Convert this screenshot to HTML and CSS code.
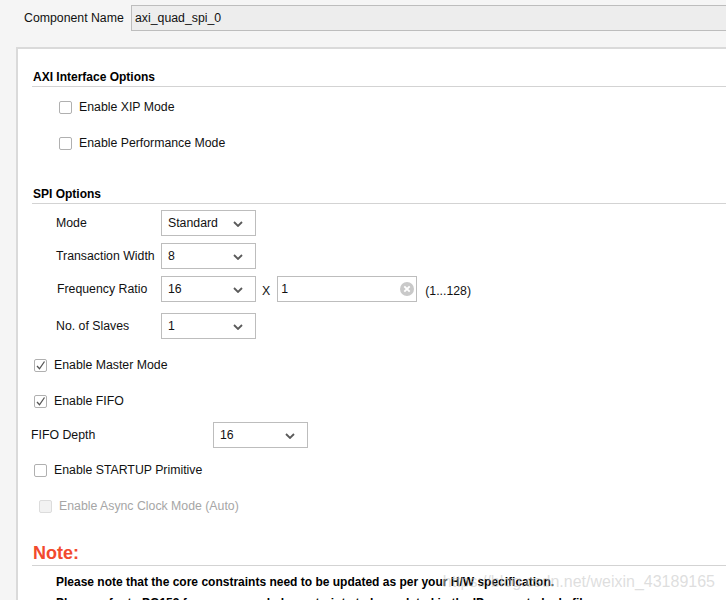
FILE: index.html
```html
<!DOCTYPE html>
<html>
<head>
<meta charset="utf-8">
<link rel="stylesheet" href="styles.css">
</head>
<body>
<div class="header">
  <div class="header-label">Component Name</div>
  <div class="name-field">axi_quad_spi_0</div>
</div>
<div class="panel">
  <div class="section-title">AXI Interface Options</div>
  <div class="axi-options">
    <div class="check-row"><span class="cb"></span><span>Enable XIP Mode</span></div>
    <div class="check-row"><span class="cb"></span><span>Enable Performance Mode</span></div>
  </div>

  <div class="section-title spi-title">SPI Options</div>
  <div class="spi-fields">
    <div class="field-row">
      <div class="field-label">Mode</div>
      <div class="select"><span>Standard</span><svg class="chev" width="10" height="6" viewBox="0 0 10 6"><polyline points="1,1 5,5 9,1" fill="none" stroke="#5a5a5a" stroke-width="1.8"/></svg></div>
    </div>
    <div class="field-row">
      <div class="field-label">Transaction Width</div>
      <div class="select"><span>8</span><svg class="chev" width="10" height="6" viewBox="0 0 10 6"><polyline points="1,1 5,5 9,1" fill="none" stroke="#5a5a5a" stroke-width="1.8"/></svg></div>
    </div>
    <div class="field-row">
      <div class="field-label freq-label">Frequency Ratio</div>
      <div class="select"><span>16</span><svg class="chev" width="10" height="6" viewBox="0 0 10 6"><polyline points="1,1 5,5 9,1" fill="none" stroke="#5a5a5a" stroke-width="1.8"/></svg></div>
      <span class="times">X</span>
      <div class="text-input"><span>1</span>
        <svg class="clear" width="14" height="14" viewBox="0 0 14 14"><circle cx="7" cy="7" r="7" fill="#c9c9c9"/><path d="M4.3 4.3 L9.7 9.7 M9.7 4.3 L4.3 9.7" stroke="#fff" stroke-width="1.9"/></svg>
      </div>
      <span class="range">(1...128)</span>
    </div>
    <div class="field-row slaves">
      <div class="field-label">No. of Slaves</div>
      <div class="select"><span>1</span><svg class="chev" width="10" height="6" viewBox="0 0 10 6"><polyline points="1,1 5,5 9,1" fill="none" stroke="#5a5a5a" stroke-width="1.8"/></svg></div>
    </div>
  </div>

  <div class="check-row master"><span class="cb"><svg width="11" height="11" viewBox="0 0 11 11"><polyline points="2,6 4.5,8.8 9.5,1.5" fill="none" stroke="#555" stroke-width="1.3"/></svg></span><span>Enable Master Mode</span></div>
  <div class="check-row fifo"><span class="cb"><svg width="11" height="11" viewBox="0 0 11 11"><polyline points="2,6 4.5,8.8 9.5,1.5" fill="none" stroke="#555" stroke-width="1.3"/></svg></span><span>Enable FIFO</span></div>
  <div class="field-row depth">
    <div class="depth-label">FIFO Depth</div>
    <div class="select"><span>16</span><svg class="chev" width="10" height="6" viewBox="0 0 10 6"><polyline points="1,1 5,5 9,1" fill="none" stroke="#5a5a5a" stroke-width="1.8"/></svg></div>
  </div>
  <div class="check-row startup"><span class="cb"></span><span>Enable STARTUP Primitive</span></div>
  <div class="check-row async disabled"><span class="cb"></span><span>Enable Async Clock Mode (Auto)</span></div>

  <div class="note-title">Note:</div>
  <div class="note-text">Please note that the core constraints need to be updated as per your H/W specification.</div>
  <div class="note-text second">Please refer to PG153 for recommended constraints to be updated in the IP generated xdc file.</div>
</div>
<div class="watermark">https://blog.csdn.net/weixin_43189165</div>
</body>
</html>
```

FILE: styles.css
```css
html, body {
  height: 600px;
  overflow: hidden;
}
body {
  margin: 0;
  background: #f5f5f5;
  font-family: "Liberation Sans", Arial, sans-serif;
  font-size: 12.3px;
  color: #111;
  position: relative;
}
.header {
  display: flex;
  align-items: center;
  height: 26px;
  margin-top: 5px;
  padding-left: 24px;
}
.header-label {
  width: 107px;
}
.name-field {
  flex: 1;
  height: 26px;
  box-sizing: border-box;
  border: 1px solid #bdbdbd;
  border-right: 0;
  background: #ededed;
  padding-left: 3px;
  display: flex;
  align-items: center;
}
.panel {
  margin: 16px 0 0 16px;
  border-top: 2px solid #dadada;
  border-left: 2px solid #dadada;
  background: #fff;
  padding-top: 20px;
  box-sizing: border-box;
  height: 553px;
  overflow: hidden;
}
.section-title {
  margin-left: 14px;
  padding-left: 1px;
  line-height: 16px;
  padding-bottom: 1px;
  border-bottom: 1px solid #d3d3d3;
  font-size: 12px;
  font-weight: bold;
  color: #000;
}
.axi-options {
  margin-top: 12px;
  padding-left: 41px;
  display: flex;
  flex-direction: column;
  gap: 20px;
}
.check-row {
  display: flex;
  align-items: center;
  height: 16px;
  gap: 7px;
}
.cb {
  width: 13px;
  height: 13px;
  box-sizing: border-box;
  border: 1px solid #b0b0b0;
  border-radius: 2px;
  background: #fff;
  display: flex;
  align-items: center;
  justify-content: center;
}
.spi-title {
  margin-top: 35px;
}
.spi-fields {
  margin-top: 6px;
  padding-left: 38px;
}
.field-row {
  display: flex;
  align-items: center;
  height: 26px;
}
.field-row + .field-row {
  margin-top: 7px;
}
.field-row.slaves {
  margin-top: 11px;
}
.field-label {
  width: 105px;
}
.freq-label {
  padding-left: 1px;
  width: 104px;
}
.select {
  width: 95px;
  height: 26px;
  box-sizing: border-box;
  border: 1px solid #bdbdbd;
  background: #fff;
  padding-left: 6px;
  padding-right: 12px;
  display: flex;
  align-items: center;
  justify-content: space-between;
}
.chev {
  margin-top: 1px;
}
.times {
  margin-left: 6px;
  padding-top: 4px;
}
.text-input {
  margin-left: 7px;
  width: 140px;
  height: 26px;
  box-sizing: border-box;
  border: 1px solid #bdbdbd;
  padding-left: 3px;
  padding-right: 2px;
  display: flex;
  align-items: center;
  justify-content: space-between;
}
.range {
  margin-left: 8px;
  padding-top: 4px;
}
.master {
  margin-top: 18px;
  padding-left: 16px;
}
.fifo {
  margin-top: 20px;
  padding-left: 16px;
}
.field-row.depth {
  margin-top: 13px;
  padding-left: 13px;
}
.depth-label {
  width: 182px;
}
.startup {
  margin-top: 14px;
  padding-left: 16px;
}
.async {
  margin-top: 20px;
  padding-left: 21px;
}
.disabled {
  color: #a6a6a6;
}
.disabled .cb {
  border-color: #dcdcdc;
  background: #f2f2f2;
}
.note-title {
  margin-top: 28px;
  margin-left: 14px;
  padding-left: 1px;
  font-size: 18px;
  font-weight: bold;
  line-height: 22px;
  padding-bottom: 1px;
  border-bottom: 1px solid #d3d3d3;
  color: #f24a2e;
}
.note-text {
  margin-top: 8px;
  padding-left: 38px;
  line-height: 16px;
  font-size: 12px;
  font-weight: bold;
  color: #000;
  white-space: nowrap;
}
.note-text.second {
  margin-top: 5px;
}
.watermark {
  position: absolute;
  top: 573px;
  right: 11px;
  font-size: 16px;
  line-height: 18px;
  color: rgba(200, 200, 200, 0.6);
  white-space: nowrap;
}
```
